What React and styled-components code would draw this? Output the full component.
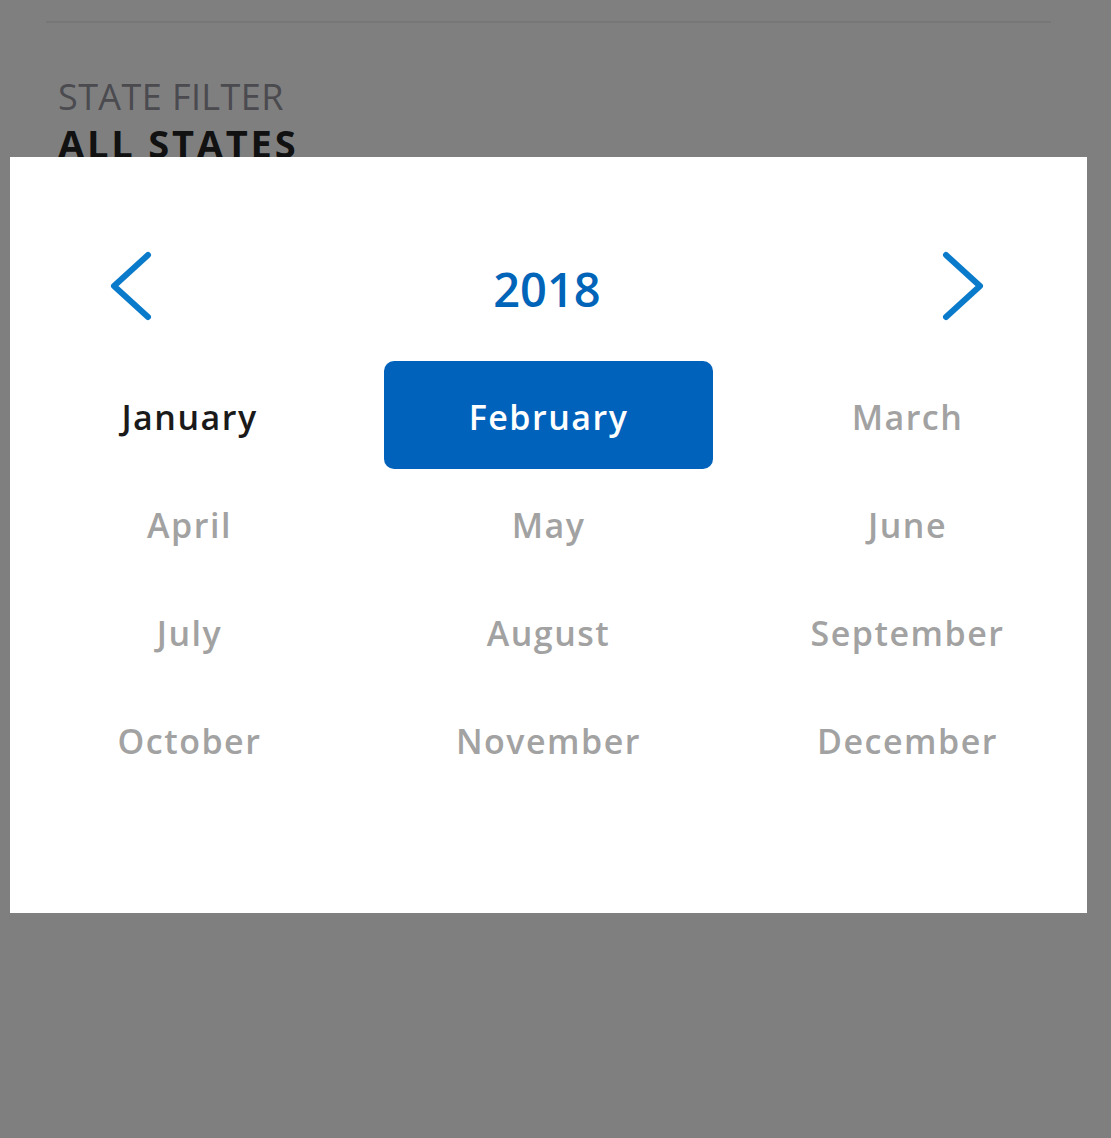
import styled, { createGlobalStyle } from 'styled-components';

const GlobalStyle = createGlobalStyle`
  html, body {
    margin: 0;
    padding: 0;
    background: #ffffff;
    font-family: "Open Sans", "Liberation Sans", sans-serif;
  }
`;

const Page = styled.div`
  width: 1111px;
  height: 1138px;
  padding: 21px 60px 0 46px;
  box-sizing: border-box;
`;

const Divider = styled.div`
  height: 2px;
  background: #eeeeee;
`;

const FilterBlock = styled.div`
  padding: 55px 0 0 12px;
`;

const FilterLabel = styled.div`
  font-size: 36px;
  line-height: 38px;
  color: #94949f;
  letter-spacing: 0.4px;
`;

const FilterValue = styled.div`
  font-size: 38px;
  line-height: 44px;
  margin-top: 5px;
  font-weight: 700;
  letter-spacing: 2.8px;
  color: #222222;
`;

const Overlay = styled.div`
  position: fixed;
  inset: 0;
  background: rgba(0, 0, 0, 0.5);
  padding: 157px 24px 0 10px;
`;

const Modal = styled.div`
  background: #ffffff;
  height: 756px;
  box-sizing: border-box;
  padding-top: 93px;
`;

const Header = styled.div`
  display: flex;
  align-items: center;
  justify-content: space-between;
  padding: 0 101px 0 98px;
  height: 72px;
`;

const NavButton = styled.button`
  border: none;
  background: none;
  padding: 0;
  width: 46px;
  height: 74px;
  cursor: pointer;
  display: flex;
`;

const Year = styled.div`
  font-size: 47px;
  font-weight: 600;
  color: #0064b9;
  margin-top: 6px;
`;

const Grid = styled.div`
  display: grid;
  grid-template-columns: repeat(3, 1fr);
  grid-auto-rows: 108px;
  margin-top: 39px;
`;

const Month = styled.div`
  display: flex;
  align-items: center;
  justify-content: center;
  margin: 0 15px;
  padding-top: 3px;
  border-radius: 10px;
  font-size: 34px;
  font-weight: 600;
  letter-spacing: 1.5px;
  background: ${(p) => (p.$selected ? '#0062bb' : 'transparent')};
  color: ${(p) => (p.$selected ? '#ffffff' : p.$current ? '#1a1a1a' : '#a2a2a2')};
`;

const Chevron = ({ dir }) => (
  <svg width="46" height="74" viewBox="0 0 46 74" fill="none">
    <polyline
      points={dir === 'left' ? '40,6 6,37 40,68' : '6,6 40,37 6,68'}
      stroke="#0a7acb"
      strokeWidth="6"
      strokeLinecap="round"
      strokeLinejoin="round"
    />
  </svg>
);

const months = [
  'January', 'February', 'March', 'April', 'May', 'June',
  'July', 'August', 'September', 'October', 'November', 'December',
];

const App = () => {
  return (
    <>
      <GlobalStyle />
      <Page>
        <Divider />
        <FilterBlock>
          <FilterLabel>STATE FILTER</FilterLabel>
          <FilterValue>ALL STATES</FilterValue>
        </FilterBlock>
      </Page>
      <Overlay>
        <Modal>
          <Header>
            <NavButton aria-label="previous year">
              <Chevron dir="left" />
            </NavButton>
            <Year>2018</Year>
            <NavButton aria-label="next year">
              <Chevron dir="right" />
            </NavButton>
          </Header>
          <Grid>
            {months.map((m, i) => (
              <Month key={m} $selected={i === 1} $current={i === 0}>
                {m}
              </Month>
            ))}
          </Grid>
        </Modal>
      </Overlay>
    </>
  );
};

export default App;
